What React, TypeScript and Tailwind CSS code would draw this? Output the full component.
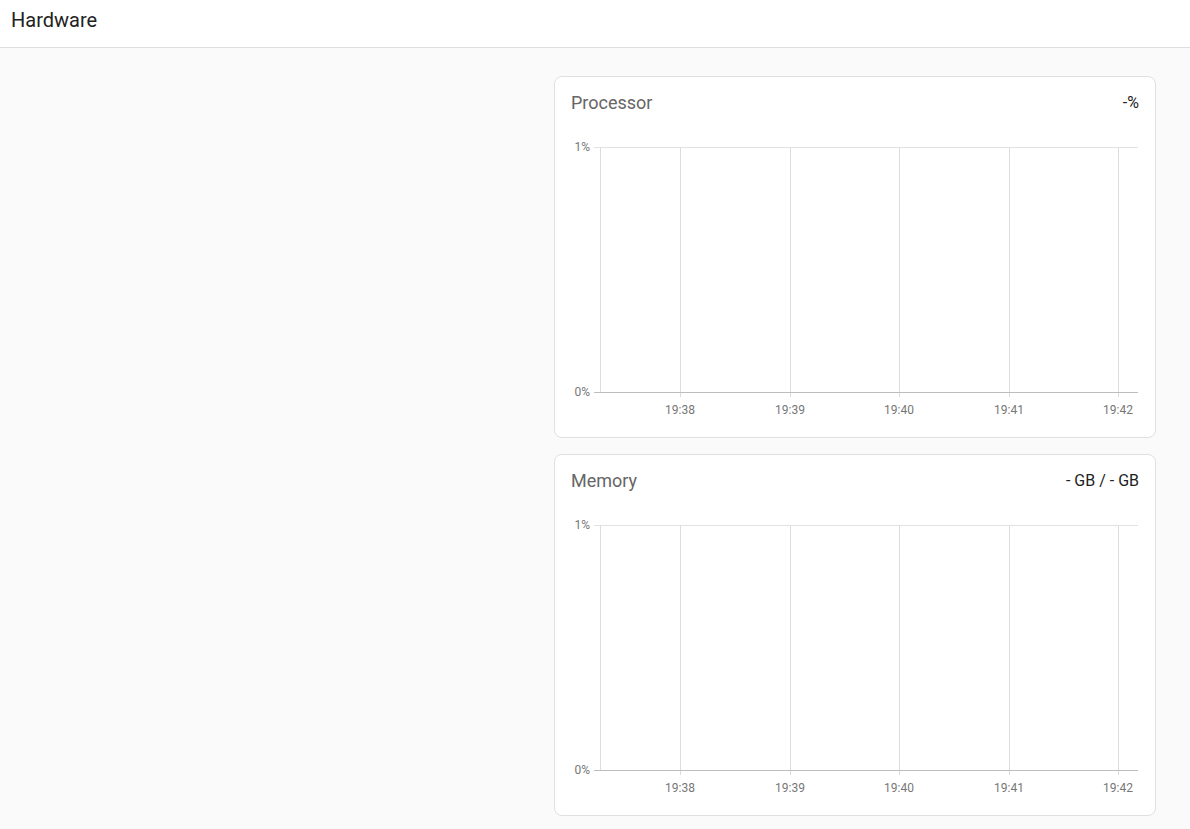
import React from "react";

const ticks = [
  { x: 109, label: "19:38" },
  { x: 219, label: "19:39" },
  { x: 328, label: "19:40" },
  { x: 438, label: "19:41" },
  { x: 547, label: "19:42" },
];

function EmptyChart() {
  return (
    <svg width={568} height={294} className="mt-[16px] block">
      {/* horizontal grid */}
      <line x1={23} y1={17.5} x2={567} y2={17.5} stroke="#e2e2e2" strokeWidth={1} />
      <text x={19} y={21} textAnchor="end" fontSize={12} fill="#777">1%</text>
      <text x={19} y={266} textAnchor="end" fontSize={12} fill="#777">0%</text>
      {/* y axis */}
      <line x1={29.5} y1={17} x2={29.5} y2={262} stroke="#dcdcdc" strokeWidth={1} />
      {ticks.map((t) => (
        <g key={t.label}>
          <line x1={t.x + 0.5} y1={17} x2={t.x + 0.5} y2={267} stroke="#dcdcdc" strokeWidth={1} />
          <text x={t.x} y={284} textAnchor="middle" fontSize={12} fill="#777">{t.label}</text>
        </g>
      ))}
      {/* x axis */}
      <line x1={23} y1={262.5} x2={567} y2={262.5} stroke="#bdbdbd" strokeWidth={1} />
    </svg>
  );
}

function ChartCard({ title, value }: { title: string; value: string }) {
  return (
    <section className="rounded-lg border border-[#e0e0e0] bg-white px-[16px] pt-[15px] pb-[13px]">
      <div className="flex h-[22px] items-center justify-between">
        <h3 className="text-[18px] leading-[22px] text-[#666]">{title}</h3>
        <span className="text-[16px] text-[#222]">{value}</span>
      </div>
      <EmptyChart />
    </section>
  );
}

export default function App() {
  return (
    <div className="min-h-[829px] bg-[#fafafa] font-['Roboto','Liberation_Sans',sans-serif]">
      <header className="flex h-[48px] items-center border-b border-[#dedede] bg-white px-[11px] pb-[7px]">
        <h1 className="text-[20px] text-[#222]">Hardware</h1>
      </header>
      <main className="flex pt-[28px] pr-[34px]">
        <div className="flex-1" />
        <div className="flex w-[602px] flex-col gap-[16px]">
          <ChartCard title="Processor" value="-%" />
          <ChartCard title="Memory" value="- GB / - GB" />
        </div>
      </main>
    </div>
  );
}
